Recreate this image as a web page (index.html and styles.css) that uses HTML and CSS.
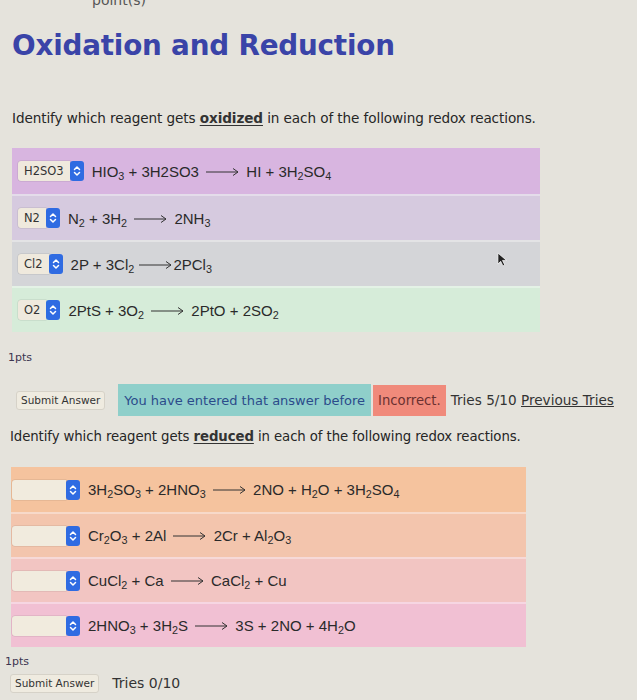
FILE: index.html
```html
<!DOCTYPE html>
<html>
<head>
<meta charset="utf-8">
<link rel="stylesheet" href="styles.css">
</head>
<body>
<div class="page">
  <div class="cut">point(s)</div>
  <h1 class="title">Oxidation and Reduction</h1>
  <p class="prompt">Identify which reagent gets <span class="key">oxidized</span> in each of the following redox reactions.</p>

  <div class="rows rows-ox">
    <div class="row ox1">
      <span class="sel"><span class="val">H2SO3</span><span class="step"><svg viewBox="0 0 14 20" width="14" height="20"><path d="M4.5 8.5 L7 6 L9.5 8.5 M4.5 11.5 L7 14 L9.5 11.5" fill="none" stroke="#fff" stroke-width="1.5" stroke-linecap="round" stroke-linejoin="round"/></svg></span></span>
      <span class="eq">HIO<sub>3</sub> + 3H2SO3 <svg class="arrow" viewBox="0 0 33 10" width="33" height="10"><path d="M0 5 H32 M27 1.5 L32 5 L27 8.5" fill="none" stroke="#333" stroke-width="1"/></svg> HI + 3H<sub>2</sub>SO<sub>4</sub></span>
    </div>
    <div class="row ox2">
      <span class="sel"><span class="val">N2</span><span class="step"><svg viewBox="0 0 14 20" width="14" height="20"><path d="M4.5 8.5 L7 6 L9.5 8.5 M4.5 11.5 L7 14 L9.5 11.5" fill="none" stroke="#fff" stroke-width="1.5" stroke-linecap="round" stroke-linejoin="round"/></svg></span></span>
      <span class="eq">N<sub>2</sub> + 3H<sub>2</sub> <svg class="arrow" viewBox="0 0 33 10" width="33" height="10"><path d="M0 5 H32 M27 1.5 L32 5 L27 8.5" fill="none" stroke="#333" stroke-width="1"/></svg> 2NH<sub>3</sub></span>
    </div>
    <div class="row ox3">
      <span class="sel"><span class="val">Cl2</span><span class="step"><svg viewBox="0 0 14 20" width="14" height="20"><path d="M4.5 8.5 L7 6 L9.5 8.5 M4.5 11.5 L7 14 L9.5 11.5" fill="none" stroke="#fff" stroke-width="1.5" stroke-linecap="round" stroke-linejoin="round"/></svg></span></span>
      <span class="eq">2P + 3Cl<sub>2</sub> <svg class="arrow tight" viewBox="0 0 33 10" width="33" height="10"><path d="M0 5 H32 M27 1.5 L32 5 L27 8.5" fill="none" stroke="#333" stroke-width="1"/></svg>2PCl<sub>3</sub></span>
      <svg class="cursor" viewBox="0 0 12 16" width="11" height="15"><path d="M1 1 L1 13 L4 10 L6.5 15 L8.5 14 L6 9 L10.5 9 Z" fill="#222" stroke="#fff" stroke-width="0.8"/></svg>
    </div>
    <div class="row ox4">
      <span class="sel"><span class="val">O2</span><span class="step"><svg viewBox="0 0 14 20" width="14" height="20"><path d="M4.5 8.5 L7 6 L9.5 8.5 M4.5 11.5 L7 14 L9.5 11.5" fill="none" stroke="#fff" stroke-width="1.5" stroke-linecap="round" stroke-linejoin="round"/></svg></span></span>
      <span class="eq">2PtS + 3O<sub>2</sub> <svg class="arrow" viewBox="0 0 33 10" width="33" height="10"><path d="M0 5 H32 M27 1.5 L32 5 L27 8.5" fill="none" stroke="#333" stroke-width="1"/></svg> 2PtO + 2SO<sub>2</sub></span>
    </div>
  </div>

  <div class="pts pts1">1pts</div>
  <div class="answer-line">
    <button class="submit">Submit Answer</button>
    <span class="msg-before">You have entered that answer before</span><span class="msg-wrong">Incorrect.</span>
    <span class="tries">Tries 5/10 <a class="prev">Previous Tries</a></span>
  </div>
  <p class="prompt prompt2">Identify which reagent gets <span class="key">reduced</span> in each of the following redox reactions.</p>

  <div class="rows rows-red">
    <div class="row rd1">
      <span class="sel empty"><span class="val"></span><span class="step"><svg viewBox="0 0 14 20" width="14" height="20"><path d="M4.5 8.5 L7 6 L9.5 8.5 M4.5 11.5 L7 14 L9.5 11.5" fill="none" stroke="#fff" stroke-width="1.5" stroke-linecap="round" stroke-linejoin="round"/></svg></span></span>
      <span class="eq">3H<sub>2</sub>SO<sub>3</sub> + 2HNO<sub>3</sub> <svg class="arrow" viewBox="0 0 33 10" width="33" height="10"><path d="M0 5 H32 M27 1.5 L32 5 L27 8.5" fill="none" stroke="#333" stroke-width="1"/></svg> 2NO + H<sub>2</sub>O + 3H<sub>2</sub>SO<sub>4</sub></span>
    </div>
    <div class="row rd2">
      <span class="sel empty"><span class="val"></span><span class="step"><svg viewBox="0 0 14 20" width="14" height="20"><path d="M4.5 8.5 L7 6 L9.5 8.5 M4.5 11.5 L7 14 L9.5 11.5" fill="none" stroke="#fff" stroke-width="1.5" stroke-linecap="round" stroke-linejoin="round"/></svg></span></span>
      <span class="eq">Cr<sub>2</sub>O<sub>3</sub> + 2Al <svg class="arrow" viewBox="0 0 33 10" width="33" height="10"><path d="M0 5 H32 M27 1.5 L32 5 L27 8.5" fill="none" stroke="#333" stroke-width="1"/></svg> 2Cr + Al<sub>2</sub>O<sub>3</sub></span>
    </div>
    <div class="row rd3">
      <span class="sel empty"><span class="val"></span><span class="step"><svg viewBox="0 0 14 20" width="14" height="20"><path d="M4.5 8.5 L7 6 L9.5 8.5 M4.5 11.5 L7 14 L9.5 11.5" fill="none" stroke="#fff" stroke-width="1.5" stroke-linecap="round" stroke-linejoin="round"/></svg></span></span>
      <span class="eq">CuCl<sub>2</sub> + Ca <svg class="arrow" viewBox="0 0 33 10" width="33" height="10"><path d="M0 5 H32 M27 1.5 L32 5 L27 8.5" fill="none" stroke="#333" stroke-width="1"/></svg> CaCl<sub>2</sub> + Cu</span>
    </div>
    <div class="row rd4">
      <span class="sel empty"><span class="val"></span><span class="step"><svg viewBox="0 0 14 20" width="14" height="20"><path d="M4.5 8.5 L7 6 L9.5 8.5 M4.5 11.5 L7 14 L9.5 11.5" fill="none" stroke="#fff" stroke-width="1.5" stroke-linecap="round" stroke-linejoin="round"/></svg></span></span>
      <span class="eq">2HNO<sub>3</sub> + 3H<sub>2</sub>S <svg class="arrow" viewBox="0 0 33 10" width="33" height="10"><path d="M0 5 H32 M27 1.5 L32 5 L27 8.5" fill="none" stroke="#333" stroke-width="1"/></svg> 3S + 2NO + 4H<sub>2</sub>O</span>
    </div>
  </div>

  <div class="pts pts2">1pts</div>
  <div class="answer-line answer2">
    <button class="submit">Submit Answer</button>
    <span class="tries tries2">Tries 0/10</span>
  </div>
</div>
</body>
</html>
```

FILE: styles.css
```css
html, body {
  margin: 0;
  padding: 0;
  background: #e5e3dc;
  height: 700px;
  overflow: hidden;
}

.page {
  font-family: "DejaVu Sans", Verdana, sans-serif;
  color: #2a2a2a;
}

.cut {
  margin: -8px 0 0 92px;
  font-size: 14px;
  line-height: 16px;
  color: #555;
}

.title {
  margin: 18px 0 0 12px;
  font-size: 27.8px;
  line-height: 40px;
  font-weight: bold;
  color: #3a44a8;
  letter-spacing: -0.2px;
}

.prompt {
  margin: 43px 0 0 12px;
  font-size: 13.6px;
  line-height: 18px;
  color: #262626;
  letter-spacing: -0.1px;
}

.key {
  font-weight: bold;
  text-decoration: underline;
  text-underline-offset: 2px;
  color: #333;
}

.rows {
  display: flex;
  flex-direction: column;
}

.rows-ox {
  margin: 21px 0 0 12px;
  width: 528px;
}

.rows-red {
  margin: 21px 0 0 11px;
  width: 515px;
}

.row {
  position: relative;
  display: flex;
  align-items: center;
  height: 46px;
  padding-left: 6px;
  box-sizing: border-box;
  border-top: 2px solid rgba(255, 255, 255, 0.35);
}

.row:first-child { border-top: none; }

.rows-red .row { height: 45px; padding-left: 1px; }

.ox1 { background: #d8b5e0; }
.ox2 { background: #d6cadf; }
.ox3 { background: #d4d5d8; }
.ox4 { background: #d6ecd9; }

.rd1 { background: #f5c39e; }
.rd2 { background: #f3c5ad; }
.rd3 { background: #f2c5c2; }
.rd4 { background: #f1c0d3; }

.sel {
  display: inline-flex;
  align-items: stretch;
  height: 20px;
  margin-right: 8px;
}

.val {
  display: flex;
  align-items: center;
  background: #efe9dd;
  border-radius: 3px 0 0 3px;
  padding: 0 6px 0 6px;
  font-size: 11.5px;
  color: #333;
  box-shadow: 0 0 0 0.5px rgba(0,0,0,0.12);
}

.sel.empty .val {
  width: 54px;
  padding: 0;
  background: #f1ebde;
}

.step {
  display: flex;
  width: 14px;
  background: #2f6be2;
  border-radius: 3px;
}

.eq {
  font-family: "Liberation Sans", Arial, sans-serif;
  font-size: 15px;
  color: #2a2a2a;
  white-space: nowrap;
}

.eq sub {
  font-size: 10.8px;
  vertical-align: -3px;
  line-height: 0;
}

.arrow {
  display: inline-block;
  vertical-align: middle;
  margin: 0 3px;
  position: relative;
  top: -1px;
}

.arrow.tight { margin: 0 1px 0 1px; }

.cursor {
  position: absolute;
  left: 485px;
  top: 10px;
}

.pts {
  font-size: 11px;
  line-height: 13px;
  color: #3c3550;
}

.pts1 { margin: 19px 0 0 8px; }

.answer-line {
  display: flex;
  align-items: center;
  height: 32px;
  margin: 20px 0 0 16px;
  white-space: nowrap;
}

.submit {
  font-family: "DejaVu Sans", sans-serif;
  font-size: 10.5px;
  color: #333;
  background: #efebe0;
  border: 1px solid #d6d2c8;
  border-radius: 3px;
  padding: 1px 4px;
  height: 19px;
  margin-right: 13px;
}

.msg-before {
  display: flex;
  align-items: center;
  height: 32px;
  padding: 0 6px;
  background: #8fcfca;
  color: #2b4b8a;
  font-size: 13px;
}

.msg-wrong {
  display: flex;
  align-items: center;
  height: 31px;
  margin-left: 2px;
  padding: 0 5px;
  background: #f08a7b;
  color: #6a3030;
  font-size: 13.2px;
}

.tries {
  font-size: 13.6px;
  color: #333;
  margin-left: 5px;
}

.prev {
  text-decoration: underline;
  color: #333;
}

.prompt2 { margin: 12px 0 0 10px; font-size: 13.3px; }

.pts2 { margin: 8px 0 0 5px; }

.answer2 { margin: 4px 0 0 10px; height: 22px; }

.tries2 { font-size: 14px; margin-left: 0; }
```
